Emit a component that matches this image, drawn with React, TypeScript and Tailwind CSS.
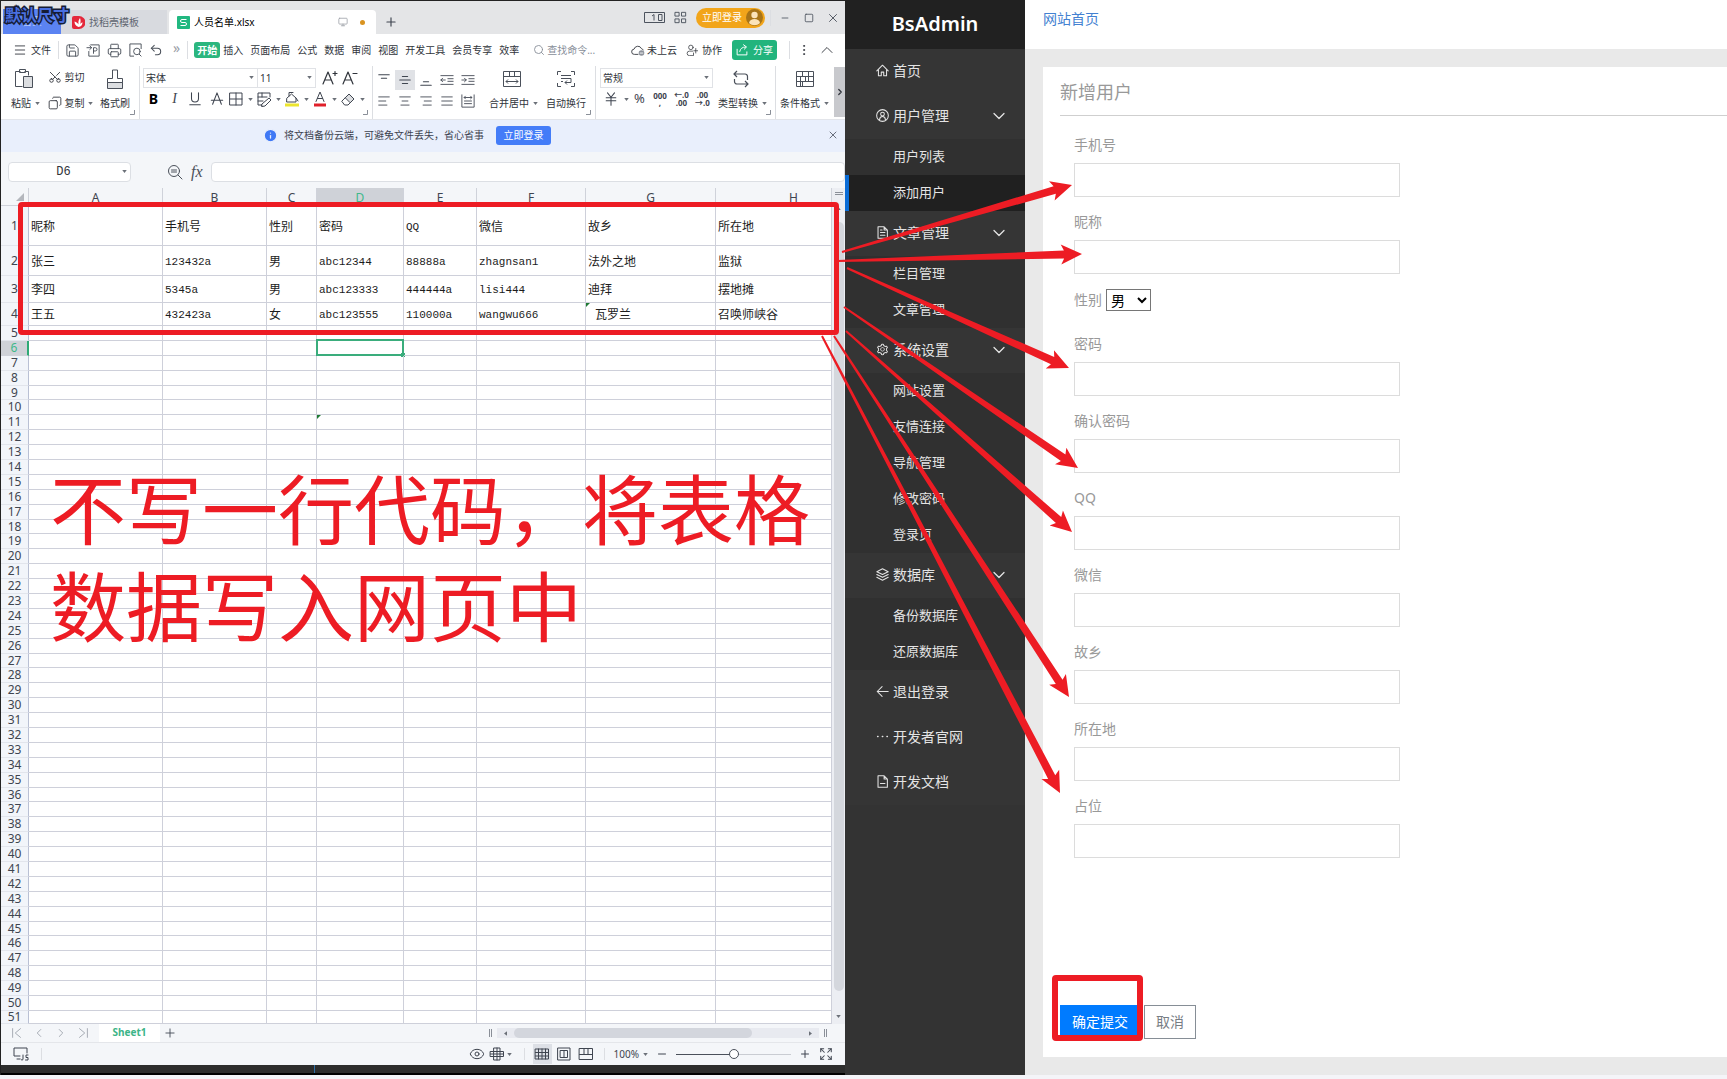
import React from "react";
import {
  AlignCenter,
  AlignJustify,
  AlignLeft,
  AlignRight,
  ChevronDown,
  ChevronLeft,
  ChevronRight,
  ChevronUp,
  Copy,
  EllipsisVertical,
  Expand,
  Eye,
  Info,
  Menu,
  Minus,
  Monitor,
  Plus,
  Printer,
  Save,
  Scissors,
  Search,
  Square,
  Undo2,
  X,
} from "lucide-react";
import { AiOutlineSetting } from "react-icons/ai";

type IconProps = { className?: string };

const Svg = ({
  className = "size-4",
  children,
}: IconProps & { children: React.ReactNode }) => (
  <svg
    viewBox="0 0 16 16"
    className={className}
    fill="none"
    stroke="currentColor"
    strokeWidth={1}
    strokeLinecap="round"
    strokeLinejoin="round"
    aria-hidden="true"
  >
    {children}
  </svg>
);

const Caret = ({ className = "" }: IconProps) => (
  <svg viewBox="0 0 6 4" className={`w-[5px] h-[3px] shrink-0 ${className}`} aria-hidden="true">
    <path d="M0 0h6L3 4z" fill="#6b7078" />
  </svg>
);

const Corner = () => (
  <svg viewBox="0 0 5 5" className="size-[5px] absolute right-1 bottom-1" aria-hidden="true">
    <path d="M4.500 0v4.500H0" fill="none" stroke="#8a8f98" />
  </svg>
);

const Divider = ({ className = "h-4" }: IconProps) => (
  <span className={`w-px shrink-0 bg-[#dcdee2] ${className}`} />
);

/* ---------- title bar ---------- */

const TitleBar = () => (
  <div className="h-[33px] bg-[#e4e5e7] flex items-end pl-0.5">
    <div className="w-[58px] h-[25px] bg-[#5b83f2] text-[#b9caf9] text-[10px] flex items-center justify-center">
      首页
    </div>
    <div className="w-[106px] h-6 bg-[#d8dadf] text-[#5f6570] text-[10px] flex items-center gap-1 pl-[11px]">
      <svg viewBox="0 0 13 13" className="size-[13px]" aria-hidden="true">
        <path d="M2 0h5a6 6 0 0 1 0 13H2a2 2 0 0 1-2-2V2a2 2 0 0 1 2-2z" fill="#e4283b" />
        <path d="M6.500 11C3.500 10 2.500 8 2.500 5.500c2 .6 3.200 1.600 4 3C6.200 6 6.500 4 8 2c.8 2 .7 4 .2 6 .5-.9 1.300-1.500 2.300-1.800 0 2.500-1.200 4.300-4 4.800z" fill="#fff" />
      </svg>
      找稻壳模板
    </div>
    <div className="w-[207px] h-6 ml-0.5 bg-white rounded-t-sm text-black text-[10px] flex items-center pl-2">
      <svg viewBox="0 0 13 13" className="size-[13px] mr-1" aria-hidden="true">
        <rect width="13" height="13" rx="1" fill="#21b880" />
        <path d="M9.500 3.500H5a1.500 1.500 0 0 0 0 3h3a1.500 1.500 0 0 1 0 3H3.500" fill="none" stroke="#fff" />
      </svg>
      人员名单.xlsx
      <Monitor className="size-2.5 ml-auto text-[#a0a4ab]" strokeWidth={2} />
      <span className="size-[5px] rounded-full bg-[#d99320] ml-3 mr-[11px]" />
    </div>
    <button className="h-6 px-2 text-[#3f4550]" aria-label="新建">
      <Plus className="size-3.5" />
    </button>
    <div className="ml-auto h-full flex items-center text-[#4c535e]">
      <svg viewBox="0 0 21 13" className="w-[21px] h-[13px] mr-2" fill="none" stroke="currentColor" aria-hidden="true">
        <path d="M.5 1.500h20v10H.5zM14.500 3.500h3.500v6h-3.500zM8 5l2-1.500v6" />
      </svg>
      <Svg className="size-[15px] mr-2">
        <path d="M2.500 2.500h4v4h-4zM9.500 2.500h4v4h-4zM2.500 9.500h4v4h-4zM9.500 9.500h4v4h-4z" />
      </Svg>
      <button className="h-5 rounded-full bg-[#f2a51a] text-white text-[10px] flex items-center gap-1 pl-1.5 pr-0.5">
        立即登录
        <svg viewBox="0 0 17 17" className="size-[17px]" aria-hidden="true">
          <circle cx="8.500" cy="8.500" r="8.500" fill="#a87417" />
          <circle cx="8.500" cy="6" r="3.200" fill="#fbe3b8" />
          <path d="M3 14c.5-3 3-4 5.500-4s5 1 5.500 4c-3 3-8 3-11 0z" fill="#fbe3b8" />
        </svg>
      </button>
      <Divider className="h-4 ml-[5px]" />
      <button className="w-6 ml-0.5 flex justify-center" aria-label="最小化">
        <Minus className="size-2.5" />
      </button>
      <button className="w-6 flex justify-center" aria-label="最大化">
        <Square className="size-2.5" />
      </button>
      <button className="w-6 flex justify-center" aria-label="关闭">
        <X className="size-3.5" strokeWidth={1.6} />
      </button>
    </div>
  </div>
);

/* ---------- menu row ---------- */

const menuTabs = ["插入", "页面布局", "公式", "数据", "审阅", "视图", "开发工具", "会员专享", "效率"];

const MenuRow = () => (
  <div className="h-8 bg-white flex items-center text-[10px] text-[#30343b] whitespace-nowrap">
    <button className="flex items-center gap-1 pl-3 pr-[7px]">
      <Menu className="size-3.5" strokeWidth={1.5} />
      文件
    </button>
    <Divider className="h-[18px]" />
    <div className="flex items-center gap-1.5 pl-1.5 text-[#4a505a]">
      <Save className="size-[15px]" strokeWidth={1.5} />
      <Svg className="size-[15px]">
        <path d="M5 2h9v12H3V9M1 5h5M4 3l2 2-2 2M8 11V5h2a1.700 1.700 0 0 1 0 3.500H8" />
      </Svg>
      <Printer className="size-[15px]" strokeWidth={1.5} />
      <Svg className="size-[15px]">
        <path d="M6 14H2V1h12v5M14 14l-2-2" />
        <circle cx="9.500" cy="9" r="3.500" />
      </Svg>
      <Undo2 className="size-3.5" strokeWidth={1.8} />
      <span className="text-sm text-[#9a9ea6] pl-1 pb-1">»</span>
    </div>
    <Divider className="h-[18px] ml-[7px] mr-[5px]" />
    <button className="h-4 px-[3px] ml-px rounded-[3px] bg-[#2bb67e] text-white font-bold">开始</button>
    <nav className="flex gap-[7px] pl-[3px]">
      {menuTabs.map((t) => (
        <button key={t}>{t}</button>
      ))}
    </nav>
    <label className="flex items-center gap-0.5 ml-3.5 text-[#888e99]">
      <Search className="size-3" strokeWidth={1.8} />
      <input
        className="w-[52px] placeholder:text-[#888e99] outline-none"
        placeholder="查找命令..."
        aria-label="查找命令"
      />
    </label>
    <div className="ml-auto flex items-center">
      <button className="flex items-center gap-0.5">
        <Svg className="size-3.5">
          <path d="M8 13H4a3 3 0 0 1-.5-6A4.500 4.500 0 0 1 12 6.500c1 .2 1.500.7 2 1.500" />
          <circle cx="12" cy="11.500" r="3.200" fill="#8d929b" stroke="none" />
          <path d="M10.500 11.500h3" stroke="#fff" />
        </Svg>
        未上云
      </button>
      <button className="flex items-center gap-1 ml-[9px]">
        <Svg className="size-3">
          <circle cx="6.500" cy="4.500" r="3" />
          <path d="M9 9.500H4.500a3 3 0 0 0 0 6H10V12M13 6v6M10.500 9h5" />
        </Svg>
        协作
      </button>
      <button className="h-5 px-1 ml-2.5 rounded-[3px] bg-[#22b47d] text-white flex items-center gap-[5px]">
        <Svg className="size-3">
          <path d="M1.500 7v7.500h13v-4M5 10c1-4 3-6 8-6M10 1l4 3-3 3" strokeWidth={1.3} />
        </Svg>
        分享
      </button>
      <Divider className="h-[18px] ml-3" />
      <EllipsisVertical className="size-3.5 ml-[7px]" strokeWidth={1.5} />
      <ChevronUp className="size-5 ml-1.5 mr-2" strokeWidth={1.1} />
    </div>
  </div>
);

/* ---------- ribbon ---------- */

const BigTool = ({
  icon,
  label,
  caret,
}: {
  icon: React.ReactNode;
  label: string;
  caret?: boolean;
}) => (
  <button className="flex flex-col items-center justify-between h-[42px] text-[#4a505a]">
    {icon}
    <span className="flex items-center gap-1 leading-4 text-[#30343b]">
      {label}
      {caret && <Caret />}
    </span>
  </button>
);

const RibbonSelect = ({ value, label, className }: { value: string; label: string; className: string }) => (
  <div className={`relative h-5 ${className}`}>
    <select
      aria-label={label}
      className="appearance-none block w-full h-full border border-[#e0e2e6] bg-white px-0.5 outline-none"
    >
      <option>{value}</option>
    </select>
    <Caret className="absolute right-1 top-2" />
  </div>
);

const DropIcon = ({ children, label }: { children: React.ReactNode; label: string }) => (
  <button className="w-7 flex items-center gap-1" aria-label={label}>
    {children}
    <Caret />
  </button>
);

const Ribbon = () => (
  <div className="h-[54px] bg-white flex text-[10px] text-[#30343b] whitespace-nowrap border-b border-[#e3e5ea]">
    <div className="relative flex w-[138px] pl-2.5 pt-[3px] justify-between pr-[9px]">
      <BigTool
        caret
        label="粘贴"
        icon={
          <svg viewBox="0 0 18 20" className="w-[18px] h-5 mr-1" fill="none" stroke="currentColor" aria-hidden="true">
            <path d="M5.500 2.500h-5v15h7M9.500 2.500h4v4M4.500.5h6v3h-6z" />
            <path d="M8.500 7.500h9v11h-9z" fill="#dcdee1" />
          </svg>
        }
      />
      <div className="flex flex-col justify-between h-[42px] text-[#4a505a]">
        <button className="flex items-center gap-[3px] h-4 text-[#30343b]">
          <Scissors className="size-3.5 rotate-270" strokeWidth={1.5} />
          剪切
        </button>
        <button className="flex items-center gap-[3px] h-4 text-[#30343b]">
          <Copy className="size-3.5 -scale-x-100" strokeWidth={1.5} />
          复制
          <Caret />
        </button>
      </div>
      <BigTool
        label="格式刷"
        icon={
          <svg viewBox="0 0 18 20" className="w-[18px] h-5" fill="none" stroke="currentColor" aria-hidden="true">
            <path d="M1.500 14V9.500h5V1h5v8.500h5V14" />
            <path d="M1.500 13.500h15v6h-15z" fill="#dcdee1" />
          </svg>
        }
      />
      <Corner />
    </div>
    <Divider className="h-full" />
    <div className="relative w-[232px] pl-[3px] pt-[2px]">
      <div className="flex items-center">
        <RibbonSelect value="宋体" label="字体" className="w-[115px]" />
        <RibbonSelect value="11" label="字号" className="w-[59px] -ml-px" />
        <button className="ml-1.5" aria-label="增大字号">
          <Svg className="size-4">
            <path d="M1 14L6 2l5 12M3 10h6M11 3.500h4M13 1.500v4" strokeWidth={1.2} />
          </Svg>
        </button>
        <button className="ml-1" aria-label="减小字号">
          <Svg className="size-4">
            <path d="M1 14L6 2l5 12M3 10h6M11 3.500h4" strokeWidth={1.2} />
          </Svg>
        </button>
      </div>
      <div className="flex items-center h-[22px] text-sm text-[#3f4550]">
        <button className="w-[21px] font-bold text-black">B</button>
        <button className="w-[21px] italic font-['Liberation_Serif']">I</button>
        <button className="w-5 flex justify-center" aria-label="下划线">
          <Svg className="size-3.5">
            <path d="M4 1v6.500a4 4 0 0 0 8 0V1M2 14.500h12" strokeWidth={1.2} />
          </Svg>
        </button>
        <button className="w-[23px] flex justify-center" aria-label="删除线">
          <Svg className="size-3.5">
            <path d="M3 14L8 1l5 13M1.500 9.500h13" strokeWidth={1.2} />
          </Svg>
        </button>
        <DropIcon label="边框">
          <Svg>
            <path d="M2 2h12v12H2zM8 2v12M2 8h12" />
          </Svg>
        </DropIcon>
        <DropIcon label="绘图边框">
          <Svg>
            <path d="M6 14H2V2h12v4M2 6h9M6 2v4M6 13l7-6 2 2-6 6-3 .5zM2 10h5" />
          </Svg>
        </DropIcon>
        <DropIcon label="填充颜色">
          <Svg>
            <path d="M1 12.500h14v3H1z" fill="#ece52e" stroke="none" />
            <path d="M3 11h9V7L7.500 3 3 7zM5 5V1.500h4M12 7l2 3" />
          </Svg>
        </DropIcon>
        <DropIcon label="字体颜色">
          <Svg>
            <path d="M2 12.500h12v3H2z" fill="#e0202a" stroke="none" />
            <path d="M4 10.500L8 1l4 9.500M5.500 7.500h5" />
          </Svg>
        </DropIcon>
        <DropIcon label="清除">
          <Svg>
            <path d="M2 10l7-7 5 5-6 6H5z" />
            <path d="M5.500 6.500L9 3l5 5-3.500 3.500z" fill="#dcdee1" />
          </Svg>
        </DropIcon>
      </div>
      <Corner />
    </div>
    <Divider className="h-full" />
    <div className="flex w-[222px] relative pl-px pt-[2px]">
      <div className="grid grid-cols-5 w-[104px] h-[42px] place-items-center text-[#3f4550]">
        <Svg className="size-3.5">
          <path d="M2 2h12M5 6h6" strokeWidth={1.2} />
        </Svg>
        <span className="size-5 bg-[#e0e2e6] flex items-center justify-center">
          <Svg className="size-3.5">
            <path d="M5 4h6M2 8h12M5 12h6" strokeWidth={1.2} />
          </Svg>
        </span>
        <Svg className="size-3.5">
          <path d="M5 10h6M2 14h12" strokeWidth={1.2} />
        </Svg>
        <Svg className="size-3.5">
          <path d="M1 3h14M9 6.500h6M9 9.500h6M1 13h14M1 8h5M3 6L1 8l2 2" />
        </Svg>
        <Svg className="size-3.5">
          <path d="M1 3h14M9 6.500h6M9 9.500h6M1 13h14M1 8h5M4 6l2 2-2 2" />
        </Svg>
        <AlignLeft className="size-3.5" strokeWidth={1.5} />
        <AlignCenter className="size-3.5" strokeWidth={1.5} />
        <AlignRight className="size-3.5" strokeWidth={1.5} />
        <AlignJustify className="size-3.5" strokeWidth={1.5} />
        <Svg className="size-3.5">
          <path d="M1 1v14h14V1M4 4h8M5 2.500L3.500 4 5 5.500M11 2.500L12.500 4 11 5.500M4 8h8M4 11h8" />
        </Svg>
      </div>
      <div className="flex pl-[11px] gap-2 pt-px">
        <BigTool
          caret
          label="合并居中"
          icon={
            <svg viewBox="0 0 20 20" className="size-5 mr-1" fill="none" stroke="currentColor" aria-hidden="true">
              <path d="M1.500 2.500h17v15h-17zM1.500 7.500h17M7.500 2.500v5M12.500 2.500v5M4 12.500h12M6 10.500l-2 2 2 2M14 10.500l2 2-2 2" />
            </svg>
          }
        />
        <BigTool
          label="自动换行"
          icon={
            <svg viewBox="0 0 20 20" className="size-5" fill="none" stroke="currentColor" aria-hidden="true">
              <path d="M1.500 6V2.500H5M15 2.500h3.500V6M1.500 14v3.500H5M15 17.500h3.500V14M5 6.500h10M5 9.500h10v4H9M11 11.500l-2 2 2 2M5 12.500h2" />
            </svg>
          }
        />
      </div>
      <Corner />
    </div>
    <Divider className="h-full" />
    <div className="flex w-[179px] relative pl-1 pt-[2px]">
      <div>
        <RibbonSelect value="常规" label="数字格式" className="w-[113px]" />
        <div className="flex items-center h-[22px] text-[#3f4550]">
          <button className="flex items-center gap-1.5 w-[30px] pl-1" aria-label="货币">
            <Svg className="size-3.5">
              <path d="M4 1l4 5 4-5M8 6v9M2.500 6.500h11M2.500 10h11" strokeWidth={1.2} />
            </Svg>
            <Caret />
          </button>
          <button className="w-[19px] text-[13px]">%</button>
          <button className="w-[22px] text-[8px] font-bold leading-[7px]">
            000
            <br />,
          </button>
          <button className="w-[21px] text-[8px] font-bold leading-[8px]">
            ←.0
            <br />
            .00
          </button>
          <button className="w-[21px] text-[8px] font-bold leading-[8px]">
            .00
            <br />
            →.0
          </button>
        </div>
      </div>
      <div className="pl-[5px] pt-px">
        <BigTool
          caret
          label="类型转换"
          icon={
            <svg viewBox="0 0 18 20" className="w-[18px] h-5 mr-1" fill="none" stroke="currentColor" strokeWidth={1.2} aria-hidden="true">
              <path d="M5 2L2 5l3 3M2 5h11a2.500 2.500 0 0 1 2.500 2.500V11M13 18l3-3-3-3M16 15H5a2.500 2.500 0 0 1-2.500-2.500V10" />
            </svg>
          }
        />
      </div>
      <Corner />
    </div>
    <Divider className="h-full" />
    <div className="flex-1 flex justify-end gap-[5px] pt-[3px]">
      <BigTool
        caret
        label="条件格式"
        icon={
          <svg viewBox="0 0 20 20" className="size-5" fill="none" stroke="currentColor" aria-hidden="true">
            <path d="M1.500 2.500h17v15h-17zM1.500 7.500h17M1.500 12.500h17M7.500 2.500v5M13.500 2.500v10M7.500 12.500v5M10.500 7.500v5M5.500 7.500v10" />
          </svg>
        }
      />
      <button className="w-[11px] h-[50px] -mt-0.5 bg-[#c8c9cd] flex items-center justify-center" aria-label="更多">
        <ChevronRight className="size-2.5" strokeWidth={3} />
      </button>
    </div>
  </div>
);

const NoticeBar = () => (
  <div className="h-8 bg-[#e9effc] flex items-center text-[10px] text-[#3d4350] pb-0.5">
    <div className="flex-1 flex items-center justify-center">
      <Info className="size-[15px] mr-1.5 fill-[#3f78f5] text-[#e9effc]" />
      将文档备份云端，可避免文件丢失，省心省事
      <button className="ml-3 h-[19px] w-[55px] rounded-[3px] bg-[#437cf8] text-white">立即登录</button>
    </div>
    <button className="w-8 pl-3.5" aria-label="关闭提示">
      <X className="size-3" strokeWidth={1.5} />
    </button>
  </div>
);

const FormulaRow = () => (
  <div className="h-9 bg-[#f4f6f9] flex items-center pt-1 text-[#4a505a]">
    <div className="relative ml-[7px] w-[123px]">
      <input
        aria-label="名称框"
        defaultValue="D6"
        className="block w-full h-5 bg-white border border-[#dcdfe4] rounded-sm text-center pr-3 text-xs font-['Liberation_Mono'] text-[#30343b]"
      />
      <Caret className="absolute right-1 top-2" />
    </div>
    <Svg className="size-4 ml-9">
      <circle cx="7" cy="7" r="5.500" />
      <path d="M11 11l4 4M4.500 6h5M4.500 8h5" />
    </Svg>
    <span className="ml-2 w-5 text-base leading-5 italic font-['Liberation_Serif']">fx</span>
    <input
      aria-label="编辑栏"
      className="flex-1 h-5 bg-white border border-[#dcdfe4] rounded-sm text-[11px] px-1"
    />
  </div>
);

/* ---------- sheet ---------- */

const columns = ["A", "B", "C", "D", "E", "F", "G", "H"];

const data = [
  ["昵称", "手机号", "性别", "密码", "QQ", "微信", "故乡", "所在地"],
  ["张三", "123432a", "男", "abc12344", "88888a", "zhagnsan1", "法外之地", "监狱"],
  ["李四", "5345a", "男", "abc123333", "444444a", "lisi444", "迪拜", "摆地摊"],
  ["王五", "432423a", "女", "abc123555", "110000a", "wangwu666", "瓦罗兰", "召唤师峡谷"],
];

const rowHeight = (n: number) => {
  if (n === 1) return "h-10";
  if (n === 2) return "h-[30px]";
  if (n === 3) return "h-[27px]";
  if (n === 4) return "h-[23px]";
  if (n === 51) return "h-3";
  return n % 9 === 0 ? "h-[14px]" : "h-[15px]";
};

const TextMark = () => (
  <svg viewBox="0 0 4 4" className="size-1 absolute left-0 top-0" aria-hidden="true">
    <path d="M0 0h4L0 4z" fill="#1f7a34" />
  </svg>
);

const Sheet = () => (
  <div className="flex bg-white">
    <table className="flex-1 table-fixed border-separate border-spacing-0 text-xs leading-3">
      <colgroup>
        <col className="w-7" />
        <col className="w-[134px]" />
        <col className="w-[104px]" />
        <col className="w-[50px]" />
        <col className="w-[87px]" />
        <col className="w-[73px]" />
        <col className="w-[109px]" />
        <col className="w-[130px]" />
        <col />
      </colgroup>
      <thead>
        <tr className="h-[18px] bg-[#f4f6f9] text-[#3f4550]">
          <th className="p-0 border-r border-b border-[#cfd2da]">
            <svg viewBox="0 0 8 8" className="size-2 ml-auto mr-1" aria-hidden="true">
              <path d="M8 0v8H0z" fill="#b4b7bd" />
            </svg>
          </th>
          {columns.map((c) => (
            <th
              key={c}
              className={`p-0 pt-0.5 font-normal border-r border-b border-[#cfd2da] ${
                c === "D" ? "bg-[#cfd2d8] text-[#3fb98a]" : ""
              } ${c === "H" ? "pl-10" : ""}`}
            >
              {c}
            </th>
          ))}
        </tr>
      </thead>
      <tbody>
        {Array.from({ length: 51 }, (_, i) => i + 1).map((n) => (
          <tr key={n} className={rowHeight(n)}>
            <th
              className={`p-0 font-normal border-r border-b ${
                n === 6
                  ? "bg-[#cfd2d8] text-[#3fb98a] border-r-2 border-r-[#2faa76] border-b-[#cfd2da]"
                  : "bg-[#f2f5fa] text-[#3f4550] border-r-[#b9c0d4] border-b-[#e2e5ec]"
              }`}
            >
              {n}
            </th>
            {columns.map((c, j) => {
              const value = data[n - 1]?.[j] ?? "";
              const latin = /^[\w]+$/.test(value);
              return (
                <td
                  key={c}
                  className={`relative p-0 whitespace-nowrap border-r border-b border-[#ced0da] text-[#1c1c1c] ${
                    value ? "pt-0.5" : ""
                  } ${value === "瓦罗兰" ? "pl-[9px]" : "pl-0.5"} ${
                    latin ? "text-[11px] font-['Liberation_Mono']" : ""
                  }`}
                >
                  {value}
                  {(value === "瓦罗兰" || (n === 11 && c === "D")) && <TextMark />}
                  {n === 6 && c === "D" && (
                    <span className="absolute -left-px -right-px -top-0.5 -bottom-px border-2 border-[#3aad7c]">
                      <span className="absolute -right-[3px] -bottom-[3px] size-1 bg-[#3aad7c]" />
                    </span>
                  )}
                </td>
              );
            })}
          </tr>
        ))}
      </tbody>
    </table>
    <div className="w-[13px] bg-[#eceef3] flex flex-col items-center">
      <span className="h-[3px] w-2 mt-1 border-y border-[#8a8f98]" />
      <Caret className="mt-3 rotate-180" />
      <span className="w-2.5 flex-1 mt-3 bg-[#d4d7dd] rounded-full" />
      <Caret className="mt-6 mb-1.5" />
    </div>
  </div>
);

const SheetTabs = () => (
  <div className="h-[18px] bg-[#f4f6f9] flex items-center text-[#9ca1aa]">
    <div className="flex items-center gap-2 pl-[9px] w-[98px]">
      <Svg className="size-3.5">
        <path d="M3 3v10M12 3L6 8l6 5" />
      </Svg>
      <ChevronLeft className="size-3.5" strokeWidth={1.5} />
      <ChevronRight className="size-3.5" strokeWidth={1.5} />
      <Svg className="size-3.5">
        <path d="M13 3v10M4 3l6 5-6 5" />
      </Svg>
    </div>
    <button className="w-[61px] h-full pb-0.5 bg-white text-[10px] leading-none font-bold text-[#3cb488]">
      Sheet1
    </button>
    <button className="pl-[3px] text-[#3f4550]" aria-label="新建工作表">
      <Plus className="size-3.5" strokeWidth={1.5} />
    </button>
    <span className="ml-auto w-[3px] h-2 border-x border-[#8a8f98]" />
    <div className="ml-[5px] mr-[5px] w-[322px] h-2.5 bg-[#e8eaf0] flex items-center px-1.5">
      <Caret className="rotate-90" />
      <span className="ml-1.5 w-[238px] h-full rounded-full bg-[#d3d6dd]" />
      <Caret className="ml-auto -rotate-90" />
    </div>
    <span className="mr-[18px] w-[3px] h-2 border-x border-[#8a8f98]" />
  </div>
);

const StatusBar = () => (
  <div className="h-[23px] bg-[#f4f6f9] border-t border-[#e4e6ea] flex items-center text-[#3f4550]">
    <Svg className="size-4 ml-3">
      <path d="M7 10H1V2h13v5M4 13h3M10 9v4.500a1.200 1.200 0 0 1-2 0M15 9h-2v2.500h2V14h-2.500" />
    </Svg>
    <Divider className="h-3 ml-3" />
    <div className="ml-auto flex items-center">
      <Eye className="size-4" strokeWidth={1.5} />
      <Svg className="size-4 ml-1">
        <path d="M5 2h6v12H5zM1.500 5.500h13v5h-13zM8 2v12M1.500 8h13" />
      </Svg>
      <Caret className="ml-0.5" />
      <Divider className="h-3 ml-3 mr-2" />
      <button className="w-[19px] h-5 bg-[#dde0e6] flex items-center justify-center" aria-label="普通视图">
        <Svg>
          <path d="M1.500 3h13v10h-13zM1.500 6.500h13M1.500 10h13M4.500 3v10M8 3v10M11.500 3v10" />
        </Svg>
      </button>
      <button className="ml-1" aria-label="分页预览">
        <Svg>
          <path d="M2 2h12v12H2zM4.500 4.500h7v7h-7zM8 4.500v7" />
        </Svg>
      </button>
      <button className="ml-1.5" aria-label="阅读模式">
        <Svg>
          <path d="M1.500 2.500h13v11h-13zM6 2.500v6h8.500M6 8.500H1.500M10 2.500v6" />
        </Svg>
      </button>
      <Divider className="h-3 ml-2.5 mr-[9px]" />
      <span className="text-[10px]">100%</span>
      <Caret className="ml-1" />
      <Minus className="size-3 ml-2" />
      <input
        type="range"
        min={0}
        max={200}
        defaultValue={100}
        aria-label="缩放"
        className="appearance-none w-[115px] h-px mx-2 bg-linear-to-r from-[#4a505a] from-50% to-[#c9ccd2] to-50% [&::-webkit-slider-thumb]:appearance-none [&::-webkit-slider-thumb]:size-2.5 [&::-webkit-slider-thumb]:rounded-full [&::-webkit-slider-thumb]:border [&::-webkit-slider-thumb]:border-[#4a505a] [&::-webkit-slider-thumb]:bg-white"
      />
      <Plus className="size-3" />
      <Expand className="size-3.5 ml-2 mr-3" strokeWidth={1.8} />
    </div>
  </div>
);

const SpreadsheetWindow = () => (
  <section className="flex flex-col min-w-0 border-t border-l border-[#222] bg-[#2d2d2d]">
    <TitleBar />
    <MenuRow />
    <Ribbon />
    <NoticeBar />
    <FormulaRow />
    <Sheet />
    <SheetTabs />
    <StatusBar />
    <div className="flex-1 border-b-2 border-black flex">
      <span className="w-px ml-[313px] bg-[#2f6fa5]" />
    </div>
  </section>
);

/* ---------- admin sidebar ---------- */

const HomeIcon = ({ className }: IconProps) => (
  <Svg className={className}>
    <path d="M1 8.500L8 1.500l7 7M3 7v7.500h3.500V10h3v4.500H13V7" strokeWidth={1.3} />
  </Svg>
);

const UserIcon = ({ className }: IconProps) => (
  <Svg className={className}>
    <path d="M8 .8a7.200 7.200 0 1 0 0 14.400A7.200 7.200 0 0 0 8 .8zM4.500 13c0-5 7-5 7 0M8 4a2.300 2.300 0 1 0 0 4.600A2.300 2.300 0 0 0 8 4z" strokeWidth={1.3} />
  </Svg>
);

const ArticleIcon = ({ className }: IconProps) => (
  <Svg className={className}>
    <path d="M2.500 1h7.500l4 4v10H2.500zM10 1v4h4M5.500 8h5.500M5.500 11.500h5.500M5.500 5h2" strokeWidth={1.3} />
  </Svg>
);

const LayersIcon = ({ className }: IconProps) => (
  <Svg className={className}>
    <path d="M8 1l7 3.500L8 8 1 4.500zM1 8l7 3.500L15 8M1 11.500L8 15l7-3.500" strokeWidth={1.3} />
  </Svg>
);

const BackIcon = ({ className }: IconProps) => (
  <Svg className={className}>
    <path d="M15 8H1.500M7.500 2l-6 6 6 6" strokeWidth={1.3} />
  </Svg>
);

const DotsIcon = ({ className }: IconProps) => (
  <Svg className={className}>
    <path d="M2 8h.5M7.800 8h.5M13.500 8h.5" strokeWidth={1.8} />
  </Svg>
);

const DocIcon = ({ className }: IconProps) => (
  <Svg className={className}>
    <path d="M2.500 1h7.500l4 4v10H2.500zM10 1v4h4M5.500 10.500h5.500" strokeWidth={1.3} />
  </Svg>
);

const menu = [
  { label: "首页", icon: HomeIcon },
  { label: "用户管理", icon: UserIcon, items: ["用户列表", "添加用户"] },
  { label: "文章管理", icon: ArticleIcon, items: ["栏目管理", "文章管理"] },
  { label: "系统设置", icon: AiOutlineSetting, items: ["网站设置", "友情连接", "导航管理", "修改密码", "登录页"] },
  { label: "数据库", icon: LayersIcon, items: ["备份数据库", "还原数据库"] },
  { label: "退出登录", icon: BackIcon },
  { label: "开发者官网", icon: DotsIcon },
  { label: "开发文档", icon: DocIcon },
];

const Sidebar = () => (
  <aside className="bg-[#333333] text-[#e4e4e4]">
    <div className="h-[49px] pb-0.5 bg-[#212121] flex items-center justify-center text-xl font-semibold text-white">
      BsAdmin
    </div>
    <nav>
      {menu.map(({ label, icon: Icon, items }) => (
        <div key={label}>
          <a href="#" className="h-[45px] pb-0.5 bg-[#353535] flex items-center text-sm pl-[31px] pr-4">
            <Icon className="size-[13px] mr-1" />
            {label}
            {items && <ChevronDown className="size-5 ml-auto" strokeWidth={1.5} />}
          </a>
          {items?.map((item) => (
            <a
              key={item}
              href="#"
              className={`h-9 flex items-center text-[13px] border-l-4 pl-11 ${
                item === "添加用户" ? "bg-[#202020] border-[#0a6cd6]" : "bg-[#303030] border-transparent"
              }`}
            >
              {item}
            </a>
          ))}
        </div>
      ))}
    </nav>
  </aside>
);

/* ---------- admin form ---------- */

const Field = ({ label }: { label: string }) => (
  <div className="mb-[15px]">
    <label htmlFor={label} className="block h-5 leading-5 mb-2">
      {label}
    </label>
    <input
      id={label}
      className="block w-full max-w-[326px] h-[34px] border border-[#dcdcdc] bg-white px-3 outline-none"
    />
  </div>
);

const AdminPage = () => (
  <main className="min-w-0 flex flex-col bg-[#e9e9e9] text-sm text-[#999]">
    <header className="h-[49px] bg-white pl-[18px] pt-[9px]">
      <a href="#" className="leading-5 text-[#4381d1]">
        网站首页
      </a>
    </header>
    <form className="flex-1 flex flex-col ml-[18px] my-[18px] bg-white pl-[17px] pb-[18px]">
      <h1 className="h-[49px] pt-[13px] text-lg leading-6 border-b border-[#cfcfcf]">新增用户</h1>
      <div className="pl-3.5 pt-[19px]">
        <Field label="手机号" />
        <Field label="昵称" />
        <div className="flex items-center mb-[23px]">
          <label htmlFor="gender" className="mr-1">
            性别
          </label>
          <select id="gender" className="h-[22px] w-[45px] border border-[#767676] bg-white text-black">
            <option>男</option>
            <option>女</option>
          </select>
        </div>
        <Field label="密码" />
        <Field label="确认密码" />
        <Field label="QQ" />
        <Field label="微信" />
        <Field label="故乡" />
        <Field label="所在地" />
        <Field label="占位" />
      </div>
      <div className="mt-auto flex gap-1">
        <button type="submit" className="h-[34px] px-3 bg-[#007bff] text-white">
          确定提交
        </button>
        <button type="button" className="h-[34px] px-[11px] border border-[#868e96] text-[#777d84]">
          取消
        </button>
      </div>
    </form>
  </main>
);

/* ---------- annotations drawn over both windows ---------- */

// [tail x, tail y, tip x, tip y]
const arrows = [
  [842, 252, 1072, 185],
  [838, 261, 1082, 254],
  [847, 268, 1069, 368],
  [844, 307, 1078, 468],
  [846, 331, 1072, 532],
  [834, 336, 1069, 697],
  [822, 336, 1060, 793],
];

const arrowPoints = ([x1, y1, x2, y2]: number[]) => {
  const len = Math.hypot(x2 - x1, y2 - y1);
  const ux = (x2 - x1) / len;
  const uy = (y2 - y1) / len;
  const at = (along: number, side: number) =>
    `${x1 + ux * along - uy * side},${y1 + uy * along + ux * side}`;
  return [
    at(0, 1),
    at(len - 18, 4),
    at(len - 21, 10),
    at(len, 0),
    at(len - 21, -10),
    at(len - 18, -4),
    at(0, -1),
  ].join(" ");
};

const Annotations = () => (
  <div className="absolute inset-0 overflow-hidden pointer-events-none">
    <p className="absolute left-[5px] top-[3px] text-base leading-6 font-bold text-[#4a70e0] [-webkit-text-stroke:3px_#151c33] [paint-order:stroke]">
      默认尺寸
    </p>
    <div className="absolute left-[18px] top-[202px] w-[821px] h-[133px] border-[5px] border-[#ed1c24] rounded-sm" />
    <div className="absolute left-[1052px] top-[975px] w-[91px] h-[66px] border-[6px] border-[#ed1c24] rounded-sm" />
    <p className="absolute left-[50px] top-[461px] text-[76px] leading-[97px] text-[#ed1c24] whitespace-nowrap">
      不写一行代码，将表格
      <br />
      数据写入网页中
    </p>
    <svg viewBox="0 0 1727 1079" width="1727" height="1079" className="absolute left-0 top-0 max-w-none" aria-hidden="true">
      {arrows.map((a) => (
        <polygon key={a.join()} points={arrowPoints(a)} fill="#ed1c24" />
      ))}
    </svg>
  </div>
);

const App = () => {
  return (
    <div className="relative min-h-screen flex flex-col bg-[#f4f4f8] pb-1 [font-family:'Noto_Sans','Noto_Sans_CJK_SC',sans-serif]">
      <div className="flex-1 grid grid-cols-[845fr_180px_702fr]">
        <SpreadsheetWindow />
        <Sidebar />
        <AdminPage />
      </div>
      <Annotations />
    </div>
  );
};

export default App;
